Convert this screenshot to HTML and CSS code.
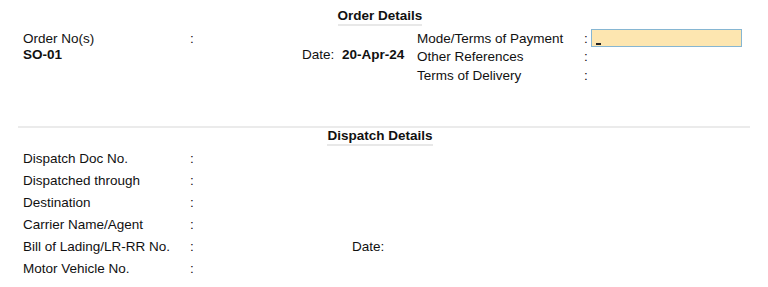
FILE: index.html
```html
<!DOCTYPE html>
<html lang="en">

<head>
  <meta charset="UTF-8">
  <meta name="viewport" content="width=device-width, initial-scale=1.0">
  <title>Order Details</title>
  <link rel="stylesheet" href="styles.css">
</head>

<body>
  <div class="section-head first">
    <span class="title">Order Details</span>
  </div>

  <div class="order">
    <div class="order-left">
      <div class="row">
        <span class="label">Order No(s)</span>
        <span class="colon">:</span>
      </div>
      <div class="row bold">SO-01</div>
    </div>

    <div class="order-date">
      <span class="date-label">Date:</span>
      <span class="bold">20-Apr-24</span>
    </div>

    <div class="order-right">
      <div class="row tall">
        <span class="label">Mode/Terms of Payment</span>
        <span class="colon">:</span>
        <span class="input"><span class="cursor"></span></span>
      </div>
      <div class="row tall">
        <span class="label">Other References</span>
        <span class="colon">:</span>
      </div>
      <div class="row tall">
        <span class="label">Terms of Delivery</span>
        <span class="colon">:</span>
      </div>
    </div>
  </div>

  <div class="separator"></div>

  <div class="section-head">
    <span class="title">Dispatch Details</span>
  </div>

  <div class="dispatch">
    <div class="drow">
      <span class="label">Dispatch Doc No.</span>
      <span class="colon">:</span>
    </div>
    <div class="drow">
      <span class="label">Dispatched through</span>
      <span class="colon">:</span>
    </div>
    <div class="drow">
      <span class="label">Destination</span>
      <span class="colon">:</span>
    </div>
    <div class="drow">
      <span class="label">Carrier Name/Agent</span>
      <span class="colon">:</span>
    </div>
    <div class="drow">
      <span class="label">Bill of Lading/LR-RR No.</span>
      <span class="colon">:</span>
      <span class="drow-date">Date:</span>
    </div>
    <div class="drow">
      <span class="label">Motor Vehicle No.</span>
      <span class="colon">:</span>
    </div>
  </div>
</body>

</html>
```

FILE: styles.css
```css
body {
  font-family: 'Liberation Sans', Arial, sans-serif;
  font-size: 13.5px;
  color: #111;
  background-color: #ffffff;
  margin: 0;
  padding: 0;
}

.bold {
  font-weight: bold;
}

/* Section headings */
.section-head {
  text-align: center;
  padding-right: 8px;
  line-height: 16px;
}

.section-head.first {
  padding-top: 8px;
}

.title {
  display: inline-block;
  font-weight: bold;
  border-bottom: 2px solid #e8e8e8;
}

/* Order details */
.order {
  display: flex;
  padding-left: 23px;
  margin-top: 3px;
}

.order-left {
  width: 279px;
  line-height: 16px;
  padding-top: 2px;
}

.row {
  display: flex;
  align-items: center;
}

.label {
  width: 167px;
  flex-shrink: 0;
}

.colon {
  width: 7px;
}

.order-date {
  width: 115px;
  display: flex;
  line-height: 16px;
  padding-top: 18px;
}

.date-label {
  width: 40px;
}

.order-right .row.tall {
  height: 18.5px;
}

.input {
  width: 149px;
  height: 16px;
  background-color: #fde6b0;
  border: 1px solid #86b6d2;
  position: relative;
}

.cursor {
  position: absolute;
  left: 4px;
  bottom: 1px;
  width: 5px;
  height: 2px;
  background-color: #222;
}

/* Dispatch details */
.separator {
  margin: 41px 18px 0;
  border-top: 2px solid #ebebeb;
}

.dispatch {
  padding-left: 23px;
  margin-top: 2px;
}

.drow {
  display: flex;
  height: 22px;
  align-items: center;
}

.drow-date {
  margin-left: 155px;
}
```
